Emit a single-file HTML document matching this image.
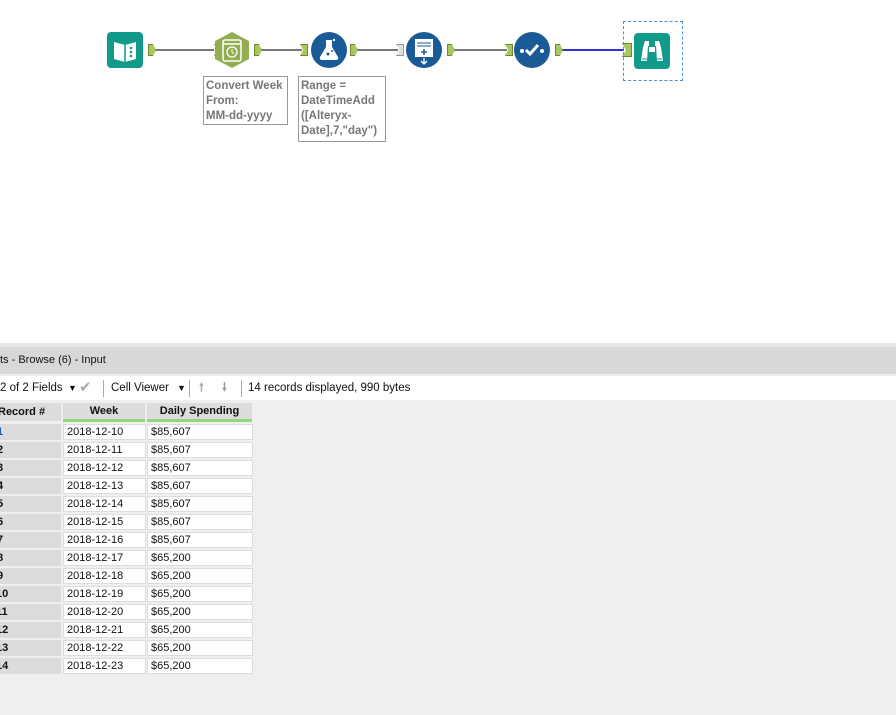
<!DOCTYPE html><html><head><style>
*{margin:0;padding:0;box-sizing:border-box}
body{width:896px;height:715px;overflow:hidden;background:#fff;font-family:"Liberation Sans",sans-serif;font-size:12px;color:#111;position:relative}
.a{position:absolute}
.note{position:absolute;border:1px solid #999;background:#fff;color:#777;font-weight:bold;font-size:11.5px;line-height:15px;padding:2px 2px}
.line{position:absolute;height:2px;background:#777;top:49px}
.conn{position:absolute;width:8px;height:12px;background:#a8c75e;top:44px;border:1px solid #6d8a2e}
.cell{position:absolute;height:16px;background:#fff;border:1px solid #ddd;line-height:15px;padding-left:3px;font-size:11px}
.rec{position:absolute;left:0;width:61px;height:16px;background:#dcdcdc;font-weight:bold;line-height:16px;font-size:11px;overflow:hidden}
</style></head><body>
<div class="line" style="left:156px;width:58px"></div>
<div class="line" style="left:262px;width:40px"></div>
<div class="line" style="left:358px;width:40px"></div>
<div class="line" style="left:455px;width:52px"></div>
<div class="line" style="left:562px;width:62px;background:#3333dd"></div>
<div class="conn" style="left:148px;clip-path:polygon(0 0,60% 0,100% 50%,60% 100%,0 100%)"></div>
<div class="conn" style="left:214px;clip-path:polygon(0 0,100% 0,100% 100%,0 100%,40% 50%)"></div>
<div class="conn" style="left:254px;clip-path:polygon(0 0,60% 0,100% 50%,60% 100%,0 100%)"></div>
<div class="conn" style="left:300px;clip-path:polygon(0 0,100% 0,100% 100%,0 100%,40% 50%)"></div>
<div class="conn" style="left:350px;clip-path:polygon(0 0,60% 0,100% 50%,60% 100%,0 100%)"></div>
<div class="conn" style="left:396px;background:#e0e0e0;border-color:#999;clip-path:polygon(0 0,100% 0,100% 100%,0 100%,40% 50%)"></div>
<div class="conn" style="left:447px;clip-path:polygon(0 0,60% 0,100% 50%,60% 100%,0 100%)"></div>
<div class="conn" style="left:505px;clip-path:polygon(0 0,100% 0,100% 100%,0 100%,40% 50%)"></div>
<div class="conn" style="left:555px;clip-path:polygon(0 0,60% 0,100% 50%,60% 100%,0 100%)"></div>
<div class="conn" style="left:622px;width:10px;height:14px;top:43px;clip-path:polygon(0 0,100% 0,100% 100%,0 100%,40% 50%)"></div>
<svg class="a" style="left:106px;top:31px" width="38" height="38"><rect x="1" y="1" width="36" height="36" rx="4" fill="#119a8a"/><path d="M8 11 L19 14 L30 11 L30 28 L19 31 L8 28Z" fill="#fff"/><path d="M19 14V31" stroke="#119a8a" stroke-width="1.5"/><circle cx="25" cy="17" r="1.3" fill="#119a8a"/><circle cx="25" cy="21" r="1.3" fill="#119a8a"/><circle cx="25" cy="25" r="1.3" fill="#119a8a"/></svg>
<svg class="a" style="left:213px;top:31px" width="38" height="38"><polygon points="19,1 36,10 36,28 19,37 2,28 2,10" fill="#93ad50"/><rect x="10" y="9" width="18" height="21" rx="2" fill="none" stroke="#fff" stroke-width="1.5"/><line x1="10" y1="13" x2="28" y2="13" stroke="#fff" stroke-width="1.5"/><circle cx="19" cy="21" r="5" fill="none" stroke="#fff" stroke-width="1.3"/><path d="M19 18v3l2 2" stroke="#fff" fill="none"/></svg>
<svg class="a" style="left:310px;top:31px" width="38" height="38"><circle cx="19" cy="19" r="18" fill="#1a5a96"/><path d="M16 9h6v7l6 10a2 2 0 0 1-2 3H12a2 2 0 0 1-2-3l6-10z" fill="#fff"/><circle cx="18" cy="23" r="1.5" fill="#1a5a96"/><circle cx="22" cy="20" r="1" fill="#1a5a96"/><circle cx="24" cy="9" r="1.2" fill="#fff"/></svg>
<svg class="a" style="left:405px;top:31px" width="38" height="38"><circle cx="19" cy="19" r="18" fill="#1a5a96"/><rect x="10" y="8" width="18" height="18" fill="#fff"/><line x1="12" y1="12" x2="26" y2="12" stroke="#1a5a96"/><line x1="12" y1="15" x2="26" y2="15" stroke="#1a5a96"/><path d="M19 18v6M16 21h6" stroke="#1a5a96" stroke-width="1.5"/><path d="M19 27v5M16 30l3 3 3-3" stroke="#fff" fill="none" stroke-width="1.3"/></svg>
<svg class="a" style="left:513px;top:31px" width="38" height="38"><circle cx="19" cy="19" r="18" fill="#1a5a96"/><circle cx="9" cy="20" r="2" fill="#fff"/><circle cx="29" cy="20" r="2" fill="#fff"/><path d="M13 19l4 4 8-9" stroke="#fff" stroke-width="3" fill="none"/></svg>
<div class="a" style="left:623px;top:21px;width:60px;height:60px;border:1px dashed #4a90e2"></div>
<svg class="a" style="left:633px;top:32px" width="38" height="38"><rect x="1" y="1" width="36" height="36" rx="4" fill="#119a8a"/><path d="M12 9h4v5h-1l-1 15h-6l2-14z M22 9h4l2 6 2 14h-6l-1-15h-1z" fill="#fff"/><rect x="16" y="15" width="6" height="5" fill="#fff"/><path d="M9 27h6M23 27h6" stroke="#119a8a" stroke-width="1"/></svg>
<div class="note" style="left:203px;top:76px;width:85px;height:49px">Convert Week<br>From:<br>MM-dd-yyyy</div>
<div class="note" style="left:298px;top:76px;width:88px;height:66px">Range =<br>DateTimeAdd<br>([Alteryx-<br>Date],7,"day")</div>
<div class="a" style="left:0;top:343px;width:896px;height:4px;background:#e6e6e6"></div>
<div class="a" style="left:0;top:347px;width:896px;height:27px;background:#d8d8d8;line-height:27px;font-size:11px;padding-left:0">ts - Browse (6) - Input</div>
<div class="a" style="left:0;top:374px;width:896px;height:2px;background:#ececec"></div>
<div class="a" style="left:0;top:376px;width:896px;height:24px;background:#fff;line-height:24px;font-size:11.5px">
<span class="a" style="left:0">2 of 2 Fields</span>
<span class="a" style="left:68px;font-size:9px">▼</span><span class="a" style="left:79px;color:#aaa;font-size:15px">✔</span>
<span class="a" style="left:103px;top:4px;width:1px;height:17px;background:#aaa"></span>
<span class="a" style="left:111px">Cell Viewer</span><span class="a" style="left:177px;font-size:9px">▼</span>
<span class="a" style="left:189px;top:4px;width:1px;height:17px;background:#aaa"></span>
<span class="a" style="left:199px;color:#aaa;font-weight:bold">🠕</span><span class="a" style="left:222px;color:#999;font-weight:bold">🠗</span>
<span class="a" style="left:241px;top:4px;width:1px;height:17px;background:#aaa"></span>
<span class="a" style="left:248px">14 records displayed, 990 bytes</span>
</div>
<div class="a" style="left:0;top:400px;width:896px;height:315px;background:#efefef"></div>
<div class="rec" style="top:403px;height:18px;line-height:18px;left:-2px;width:63px">Record #</div>
<div class="a" style="left:63px;top:403px;width:82px;height:19px;background:#dcdcdc;border-bottom:3px solid #8fd97b;text-align:center;font-weight:bold;line-height:17px;font-size:11px">Week</div>
<div class="a" style="left:147px;top:403px;width:105px;height:19px;background:#dcdcdc;border-bottom:3px solid #8fd97b;text-align:center;font-weight:bold;line-height:17px;font-size:11px">Daily Spending</div>
<div id="rows"></div>
<script>
var d=["2018-12-10","2018-12-11","2018-12-12","2018-12-13","2018-12-14","2018-12-15","2018-12-16","2018-12-17","2018-12-18","2018-12-19","2018-12-20","2018-12-21","2018-12-22","2018-12-23"],h="";
for(var i=0;i<14;i++){var t=424+i*18,v=i<7?"$85,607":"$65,200",n=i+1;
h+='<div class="rec" style="top:'+t+'px"><span class="a" style="left:'+(n<10?-3:-4)+'px;color:'+(i==0?'#1a5fb4':'#111')+'">'+n+'</span></div>';
h+='<div class="cell" style="top:'+t+'px;left:63px;width:83px">'+d[i]+'</div>';
h+='<div class="cell" style="top:'+t+'px;left:147px;width:106px">'+v+'</div>';}
document.getElementById("rows").innerHTML=h;
</script>
</body></html>
